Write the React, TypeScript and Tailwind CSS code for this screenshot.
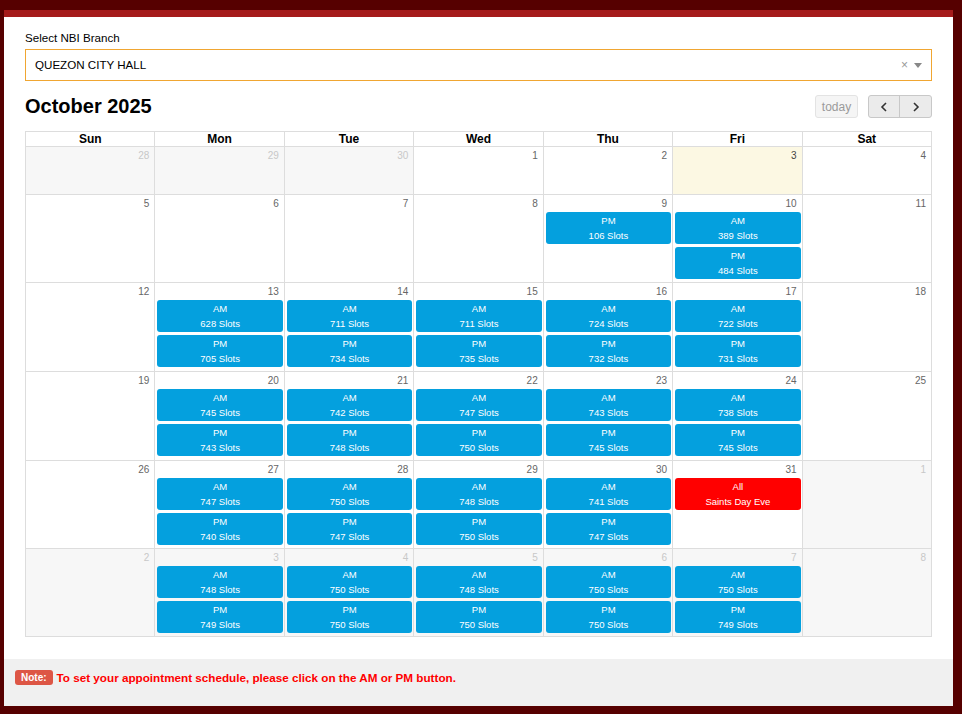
import React from "react";

type Slot = { label: string; sub: string; holiday?: boolean };
type Day = { n: number; other?: boolean; today?: boolean; slots?: Slot[] };

const DAY_NAMES = ["Sun", "Mon", "Tue", "Wed", "Thu", "Fri", "Sat"];

const ROW_HEIGHTS = ["min-h-[48px]", "min-h-[88px]", "min-h-[89px]", "min-h-[89px]", "min-h-[88px]", "min-h-[88px]"];

const amPm = (am: number, pm: number): Slot[] => [
  { label: "AM", sub: `${am} Slots` },
  { label: "PM", sub: `${pm} Slots` },
];

const WEEKS: Day[][] = [
  [
    { n: 28, other: true },
    { n: 29, other: true },
    { n: 30, other: true },
    { n: 1 },
    { n: 2 },
    { n: 3, today: true },
    { n: 4 },
  ],
  [
    { n: 5 },
    { n: 6 },
    { n: 7 },
    { n: 8 },
    { n: 9, slots: [{ label: "PM", sub: "106 Slots" }] },
    { n: 10, slots: amPm(389, 484) },
    { n: 11 },
  ],
  [
    { n: 12 },
    { n: 13, slots: amPm(628, 705) },
    { n: 14, slots: amPm(711, 734) },
    { n: 15, slots: amPm(711, 735) },
    { n: 16, slots: amPm(724, 732) },
    { n: 17, slots: amPm(722, 731) },
    { n: 18 },
  ],
  [
    { n: 19 },
    { n: 20, slots: amPm(745, 743) },
    { n: 21, slots: amPm(742, 748) },
    { n: 22, slots: amPm(747, 750) },
    { n: 23, slots: amPm(743, 745) },
    { n: 24, slots: amPm(738, 745) },
    { n: 25 },
  ],
  [
    { n: 26 },
    { n: 27, slots: amPm(747, 740) },
    { n: 28, slots: amPm(750, 747) },
    { n: 29, slots: amPm(748, 750) },
    { n: 30, slots: amPm(741, 747) },
    { n: 31, slots: [{ label: "All", sub: "Saints Day Eve", holiday: true }] },
    { n: 1, other: true },
  ],
  [
    { n: 2, other: true },
    { n: 3, other: true, slots: amPm(748, 749) },
    { n: 4, other: true, slots: amPm(750, 750) },
    { n: 5, other: true, slots: amPm(748, 750) },
    { n: 6, other: true, slots: amPm(750, 750) },
    { n: 7, other: true, slots: amPm(750, 749) },
    { n: 8, other: true },
  ],
];

function SlotButton({ slot }: { slot: Slot }) {
  return (
    <button
      className={`mb-[3px] ml-[2px] mr-[1px] flex h-[32px] w-[calc(100%-3px)] flex-col items-center justify-center rounded-[3px] text-[9.5px] leading-[15px] text-white ${
        slot.holiday ? "bg-[#ff0000]" : "bg-[#04a0de]"
      }`}
    >
      <span>{slot.label}</span>
      <span>{slot.sub}</span>
    </button>
  );
}

function DayCell({ day }: { day: Day }) {
  const bg = day.today ? "bg-[#fcf8e3]" : day.other ? "bg-[#f7f7f7]" : "bg-white";
  return (
    <div className={`flex flex-col border-b border-r border-[#dddddd] ${bg}`}>
      <div
        className={`h-[17px] pr-[5px] pt-[2px] text-right text-[10px] leading-[13px] ${
          day.other ? "text-[#c8c8c8]" : day.today ? "text-[#444]" : "text-[#666]"
        }`}
      >
        {day.n}
      </div>
      {day.slots?.map((s, i) => <SlotButton key={i} slot={s} />)}
    </div>
  );
}

export default function App() {
  return (
    <div
      className="min-h-[714px] bg-[#560000] pl-[4px] pr-[9px] pt-[10px] pb-[8px]"
      style={{ fontFamily: '"Liberation Sans", Arial, sans-serif' }}
    >
      <div className="h-[7px] bg-[#a51b1b]" />
      <div className="bg-white px-[21px] pb-[22px] pt-[14px]">
        <label className="block text-[11.6px] leading-[14px] text-black">Select NBI Branch</label>
        <div className="mt-[4px] flex h-[32px] items-center border border-[#f0a632] pl-[9px] pr-[9px]">
          <span className="flex-1 text-[11.6px] text-black">QUEZON CITY HALL</span>
          <span className="mr-[6px] text-[12px] leading-none text-[#999]">×</span>
          <span className="mt-[1px] h-0 w-0 border-x-[4px] border-t-[5px] border-x-transparent border-t-[#888]" />
        </div>

        <div className="mt-[14px] flex h-[23px] items-center">
          <h2 className="flex-1 text-[20px] font-bold leading-[23px] text-black">October 2025</h2>
          <button className="h-[23px] w-[43px] rounded-[3px] border border-[#e3e3e3] bg-[#f5f5f5] text-[12px] text-[#9a9a9a]">
            today
          </button>
          <div className="ml-[10px] flex h-[23px] overflow-hidden rounded-[3px] border border-[#c8c8c8] bg-[#ebebeb]">
            <button className="flex w-[31px] items-center justify-center border-r border-[#c8c8c8]">
              <svg width="8" height="10" viewBox="0 0 8 10">
                <path d="M6 1 L2 5 L6 9" fill="none" stroke="#333" strokeWidth="1.6" />
              </svg>
            </button>
            <button className="flex w-[31px] items-center justify-center">
              <svg width="8" height="10" viewBox="0 0 8 10">
                <path d="M2 1 L6 5 L2 9" fill="none" stroke="#333" strokeWidth="1.6" />
              </svg>
            </button>
          </div>
        </div>

        <div className="mt-[13px] border-l border-t border-[#dddddd]">
          <div className="grid grid-cols-7">
            {DAY_NAMES.map((d) => (
              <div
                key={d}
                className="h-[15px] border-b border-r border-[#dddddd] text-center text-[12px] font-bold leading-[15px] text-black"
              >
                {d}
              </div>
            ))}
          </div>
          {WEEKS.map((week, wi) => (
            <div key={wi} className={`grid grid-cols-7 ${ROW_HEIGHTS[wi]}`}>
              {week.map((day, di) => (
                <DayCell key={di} day={day} />
              ))}
            </div>
          ))}
        </div>
      </div>

      <div className="flex h-[47px] items-start bg-[#f0f0f0] pl-[11px] pt-[11px]">
        <span className="rounded-[3px] bg-[#dd5645] px-[6px] py-[2px] text-[10px] font-bold leading-[11px] text-white">
          Note:
        </span>
        <span className="ml-[4px] text-[11.7px] font-bold leading-[15px] text-[#ff0000]">
          To set your appointment schedule, please click on the AM or PM button.
        </span>
      </div>
    </div>
  );
}
